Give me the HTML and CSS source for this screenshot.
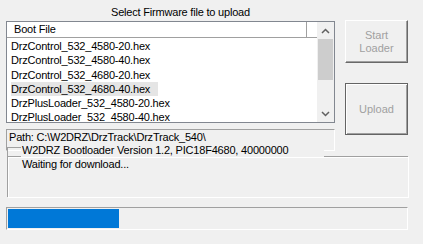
FILE: index.html
```html
<!DOCTYPE html>
<html>
<head>
<meta charset="utf-8">
<link rel="stylesheet" href="styles.css">
</head>
<body>
<div class="window">
  <div class="top">
    <div class="leftcol">
      <div class="title">Select Firmware file to upload</div>
      <div class="listbox">
        <div class="listmain">
          <div class="header">
            <div class="col1">Boot File</div>
            <div class="col2"></div>
          </div>
          <div class="rows">
            <div class="row">DrzControl_532_4580-20.hex</div>
            <div class="row">DrzControl_532_4580-40.hex</div>
            <div class="row">DrzControl_532_4680-20.hex</div>
            <div class="row sel"><span>DrzControl_532_4680-40.hex</span></div>
            <div class="row">DrzPlusLoader_532_4580-20.hex</div>
            <div class="row">DrzPlusLoader_532_4580-40.hex</div>
          </div>
        </div>
        <div class="vscroll">
          <div class="arrow up"><svg width="9" height="6" viewBox="0 0 9 6"><path d="M1 5 L4.5 1.5 L8 5" fill="none" stroke="#606060" stroke-width="1.5"/></svg></div>
          <div class="track"><div class="thumb"></div></div>
          <div class="arrow down"><svg width="9" height="6" viewBox="0 0 9 6"><path d="M1 1 L4.5 4.5 L8 1" fill="none" stroke="#606060" stroke-width="1.5"/></svg></div>
        </div>
      </div>
      <div class="pathbox">Path: C:\W2DRZ\DrzTrack\DrzTrack_540\</div>
    </div>
    <div class="rightcol">
      <div class="btn start">Start<br>Loader</div>
      <div class="btn upload">Upload</div>
    </div>
  </div>
  <div class="status">
    <div class="caption">W2DRZ Bootloader Version 1.2, PIC18F4680, 40000000</div>
    <div class="msg">Waiting for download...</div>
  </div>
  <div class="progress"><div class="bar" style="width:111px"></div></div>
</div>
</body>
</html>
```
FILE: styles.css
```css
* { box-sizing: border-box; }
html, body { margin: 0; padding: 0; }
body {
  background: #f0f0f0;
  font-family: "Liberation Sans", Arial, sans-serif;
  font-size: 11px;
  letter-spacing: -0.2px;
  color: #000;
  width: 423px;
  height: 244px;
  overflow: hidden;
}
.window { padding: 6px 15px 0 6px; position: relative; height: 244px; }
.top { display: flex; gap: 10px; }
.leftcol { width: 329px; }
.title { height: 15px; line-height: 13px; text-align: center; padding-left: 20px; }
.listbox {
  height: 102px;
  border: 1px solid #828790;
  background: #fff;
  display: flex;
}
.listmain { flex: 1; overflow: hidden; }
.header { display: flex; height: 16px; border-bottom: 1px solid #a0a0a0; }
.col1 { width: 300px; padding-left: 7px; line-height: 15px; border-right: 1px solid #a0a0a0; }
.col2 { flex: 1; }
.rows { padding-top: 1px; }
.row { height: 14.3px; line-height: 14px; padding-left: 4px; white-space: nowrap; }
.row.sel span { background: #e5e5e5; display: inline-block; width: 147px; }
.vscroll { width: 17px; background: #f0f0f0; display: flex; flex-direction: column; }
.arrow { height: 17px; display: flex; align-items: center; justify-content: center; }
.track { flex: 1; position: relative; }
.thumb { margin: 0 1px; height: 41px; background: #cdcdcd; }
.pathbox {
  margin-top: 6px;
  height: 22px;
  border-top: 1px solid #a0a0a0;
  border-left: 1px solid #a0a0a0;
  border-right: 1px solid #fff;
  border-bottom: 1px solid #fff;
  padding: 1px 0 0 2px;
  line-height: 12px;
}
.rightcol { display: flex; flex-direction: column; gap: 20px; padding-top: 14px; }
.btn {
  width: 63px;
  display: flex; align-items: center; justify-content: center; text-align: center;
  color: #a0a0a0; font-size: 11px; line-height: 13px; letter-spacing: 0;
  background: #f0f0f0;
}
.btn.start {
  height: 43px;
  border: 1px solid #fff;
  border-right-color: #696969;
  border-bottom-color: #696969;
  box-shadow: inset -1px -1px 0 #a0a0a0;
}
.btn.upload {
  height: 52px;
  border: 1px solid #646464;
  box-shadow: inset 1px 1px 0 #fff, inset -1px -1px 0 #a0a0a0;
}
.status {
  margin-top: 5px;
  margin-left: 1px;
  height: 41px;
  border-top: 1px solid #a0a0a0;
  border-left: 1px solid #a0a0a0;
  box-shadow: 1px 1px 0 #fff, inset 1px 1px 0 #fff;
  position: relative;
  padding: 0 0 0 13px;
}
.status::before {
  content: "";
  position: absolute;
  top: -10px;
  left: -1px;
  width: 14px;
  height: 10px;
  border-top: 1px solid #a0a0a0;
  border-left: 1px solid #a0a0a0;
}
.caption {
  position: relative;
  margin-top: -13px;
  height: 13px;
  width: 303px;
  background: #f0f0f0;
  padding-left: 1px;
  line-height: 12px;
}
.msg { line-height: 13px; padding-left: 1px; margin-top: 1px; }
.progress {
  margin-top: 10px;
  height: 23px;
  border-top: 1px solid #a0a0a0;
  border-left: 1px solid #a0a0a0;
  border-right: 1px solid #fff;
  border-bottom: 1px solid #fff;
  padding: 1px;
  width: 402px;
}
.bar { height: 19px; background: #0078d7; }
```
